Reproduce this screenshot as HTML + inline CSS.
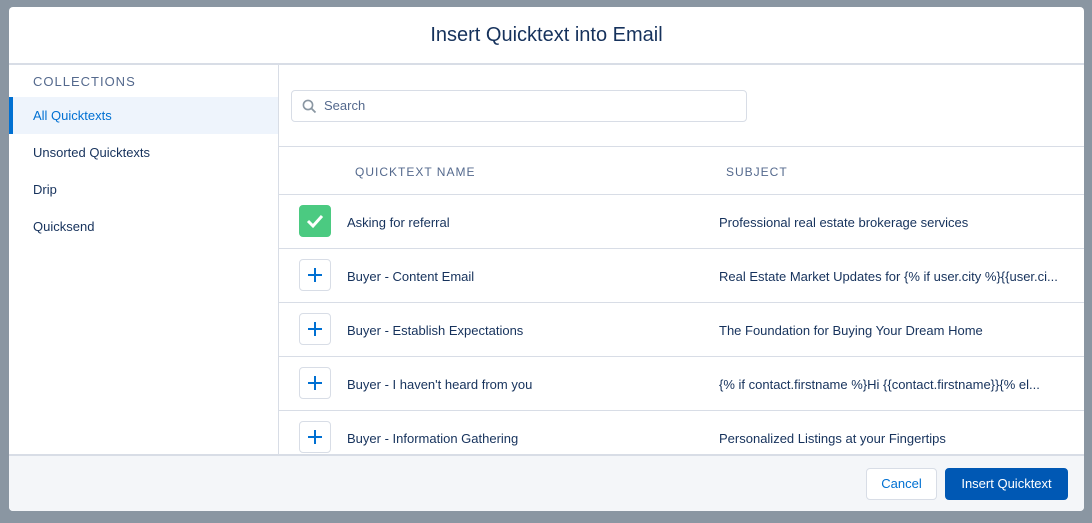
<!DOCTYPE html>
<html><head><style>
*{box-sizing:border-box;margin:0;padding:0}
body{width:1092px;height:523px;background:#8a96a2;font-family:"Liberation Sans",sans-serif;position:relative;overflow:hidden;color:#16325c}
.m{position:absolute;left:9px;top:7px;width:1075px;height:504px;background:#fff;border-radius:4px;overflow:hidden}
.hd{height:58px;border-bottom:2px solid #d8dde6;text-align:center;font-size:20px;line-height:57px;color:#16325c;font-weight:300}
.sb{position:absolute;left:0;top:58px;width:270px;height:390px;border-right:1px solid #d8dde6;background:#fff}
.sb .t{font-size:13px;letter-spacing:1px;color:#54698d;padding:9px 0 0 24px;height:32px}
.sb div.i{height:37px;line-height:37px;padding-left:24px;font-size:13px;color:#16325c}
.sb div.a{background:#eef4fc;color:#0070d2;border-left:4px solid #0070d2;padding-left:20px}
.sr{position:absolute;left:282px;top:83px;width:456px;height:32px;border:1px solid #d8dde6;border-radius:4px;font-size:13px;color:#54698d;line-height:30px;padding-left:32px}
.rows{position:absolute;left:270px;top:139px;width:805px}
.th{height:49px;border-top:1px solid #d8dde6;border-bottom:1px solid #d8dde6;font-size:12px;letter-spacing:1px;color:#54698d;position:relative}
.th span{position:absolute;top:18px}
.r{height:54px;border-bottom:1px solid #d8dde6;position:relative;font-size:13px;color:#16325c}
.r span{position:absolute;top:20px;white-space:nowrap}
.cb{position:absolute;left:20px;top:10px;width:32px;height:32px;border:1px solid #d8dde6;border-radius:4px;background:#fff}
.cb.on{background:#4bca81;border-color:#4bca81}
.ft{position:absolute;left:0;top:447px;width:1075px;height:57px;background:#f4f6f9;border-top:2px solid #d8dde6}
.b{position:absolute;top:12px;height:32px;border-radius:4px;font-size:13px;line-height:30px;text-align:center}
</style></head><body>
<div class="m">
<div class="hd">Insert Quicktext into Email</div>
<div class="sb">
<div class="t">COLLECTIONS</div>
<div class="i a">All Quicktexts</div>
<div class="i">Unsorted Quicktexts</div>
<div class="i">Drip</div>
<div class="i">Quicksend</div>
</div>
<div class="sr"><svg style="position:absolute;left:10px;top:8px" width="15" height="15" viewBox="0 0 15 15"><circle cx="6" cy="6" r="4.6" fill="none" stroke="#8a96a2" stroke-width="1.6"/><path d="M9.5 9.5L13.5 13.5" stroke="#8a96a2" stroke-width="1.8"/></svg>Search</div>
<div class="rows">
<div class="th"><span style="left:76px">QUICKTEXT NAME</span><span style="left:447px">SUBJECT</span></div>
<div class="r"><div class="cb on"><svg width="30" height="30" viewBox="0 0 30 30"><path d="M8 15l5 5 9-10" fill="none" stroke="#fff" stroke-width="3"/></svg></div><span style="left:68px">Asking for referral</span><span style="left:440px">Professional real estate brokerage services</span></div>
<div class="r"><div class="cb"><svg width="30" height="30" viewBox="0 0 30 30"><path d="M15 8v14M8 15h14" stroke="#0070d2" stroke-width="2"/></svg></div><span style="left:68px">Buyer - Content Email</span><span style="left:440px">Real Estate Market Updates for {% if user.city %}{{user.ci...</span></div>
<div class="r"><div class="cb"><svg width="30" height="30" viewBox="0 0 30 30"><path d="M15 8v14M8 15h14" stroke="#0070d2" stroke-width="2"/></svg></div><span style="left:68px">Buyer - Establish Expectations</span><span style="left:440px">The Foundation for Buying Your Dream Home</span></div>
<div class="r"><div class="cb"><svg width="30" height="30" viewBox="0 0 30 30"><path d="M15 8v14M8 15h14" stroke="#0070d2" stroke-width="2"/></svg></div><span style="left:68px">Buyer - I haven't heard from you</span><span style="left:440px">{% if contact.firstname %}Hi {{contact.firstname}}{% el...</span></div>
<div class="r"><div class="cb"><svg width="30" height="30" viewBox="0 0 30 30"><path d="M15 8v14M8 15h14" stroke="#0070d2" stroke-width="2"/></svg></div><span style="left:68px">Buyer - Information Gathering</span><span style="left:440px">Personalized Listings at your Fingertips</span></div>
</div>
<div class="ft">
<div class="b" style="left:857px;width:71px;background:#fff;border:1px solid #d8dde6;color:#0070d2">Cancel</div>
<div class="b" style="left:936px;width:123px;background:#0058b4;color:#fff;border:1px solid #0058b4">Insert Quicktext</div>
</div>
</div>
</body></html>
